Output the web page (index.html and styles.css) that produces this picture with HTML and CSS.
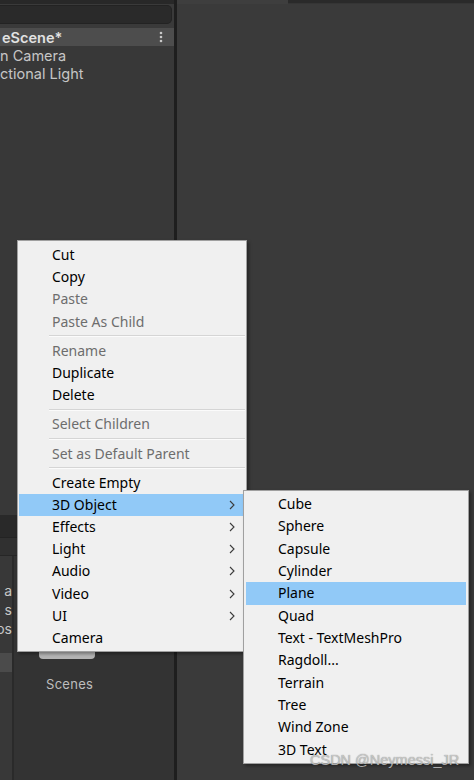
FILE: index.html
```html
<!DOCTYPE html>
<html lang="en">
<head>
<meta charset="UTF-8">
<meta name="viewport" content="width=device-width, initial-scale=1.0">
<title>Hierarchy context menu</title>
<link rel="stylesheet" href="styles.css">
</head>
<body>
<div class="editor">
    <div class="left-col">
        <div class="hierarchy">
            <div class="hier-toolbar">
                <div class="search"></div>
            </div>
            <div class="scene-row">
                <span>eScene*</span>
                <svg class="dots" width="4" height="12" viewBox="0 0 4 12">
                    <circle cx="2" cy="2" r="1.3"/>
                    <circle cx="2" cy="6" r="1.3"/>
                    <circle cx="2" cy="10" r="1.3"/>
                </svg>
            </div>
            <div class="hier-item">n Camera</div>
            <div class="hier-item">ctional Light</div>
        </div>
        <div class="project">
            <div class="project-tabs"></div>
            <div class="project-toolbar"></div>
            <div class="project-body">
                <div class="tree">
                    <div class="tree-item">a</div>
                    <div class="tree-item">s</div>
                    <div class="tree-item">os</div>
                    <div class="tree-item selected"></div>
                </div>
                <div class="tree-split"></div>
                <div class="assets">
                    <div class="folder-thumb"></div>
                    <div class="asset-label">Scenes</div>
                </div>
            </div>
        </div>
    </div>
    <div class="splitter"></div>
    <div class="right-col">
        <div class="right-top">
            <div class="tab-light"></div>
            <div class="tab-dark"></div>
        </div>
    </div>
</div>

<div class="menu main-menu">
    <div class="item">Cut</div>
    <div class="item">Copy</div>
    <div class="item disabled">Paste</div>
    <div class="item disabled">Paste As Child</div>
    <div class="sep"></div>
    <div class="item disabled">Rename</div>
    <div class="item">Duplicate</div>
    <div class="item">Delete</div>
    <div class="sep"></div>
    <div class="item disabled">Select Children</div>
    <div class="sep"></div>
    <div class="item disabled">Set as Default Parent</div>
    <div class="sep"></div>
    <div class="item">Create Empty</div>
    <div class="item active sub">3D Object<svg class="arrow" width="6" height="10" viewBox="0 0 6 10"><path d="M1 1 L5 5 L1 9"/></svg></div>
    <div class="item sub">Effects<svg class="arrow" width="6" height="10" viewBox="0 0 6 10"><path d="M1 1 L5 5 L1 9"/></svg></div>
    <div class="item sub">Light<svg class="arrow" width="6" height="10" viewBox="0 0 6 10"><path d="M1 1 L5 5 L1 9"/></svg></div>
    <div class="item sub">Audio<svg class="arrow" width="6" height="10" viewBox="0 0 6 10"><path d="M1 1 L5 5 L1 9"/></svg></div>
    <div class="item sub">Video<svg class="arrow" width="6" height="10" viewBox="0 0 6 10"><path d="M1 1 L5 5 L1 9"/></svg></div>
    <div class="item sub">UI<svg class="arrow" width="6" height="10" viewBox="0 0 6 10"><path d="M1 1 L5 5 L1 9"/></svg></div>
    <div class="item">Camera</div>
</div>

<div class="menu sub-menu">
    <div class="item">Cube</div>
    <div class="item">Sphere</div>
    <div class="item">Capsule</div>
    <div class="item">Cylinder</div>
    <div class="item active">Plane</div>
    <div class="item">Quad</div>
    <div class="item">Text - TextMeshPro</div>
    <div class="item">Ragdoll...</div>
    <div class="item">Terrain</div>
    <div class="item">Tree</div>
    <div class="item">Wind Zone</div>
    <div class="item">3D Text</div>
</div>

<div class="watermark">CSDN @Neymessi_JR</div>
</body>
</html>
```

FILE: styles.css
```css
body {
    margin: 0;
    width: 474px;
    height: 780px;
    overflow: hidden;
    background-color: #393939;
    font-family: Inter, "Noto Sans", sans-serif;
}
.editor {
    display: grid;
    grid-template-columns: 174px 3px 1fr;
    height: 780px;
}
.left-col {
    display: flex;
    flex-direction: column;
}
.hierarchy {
    height: 515px;
    background-color: #383838;
}
.hier-toolbar {
    height: 28px;
    padding-top: 5px;
    box-sizing: border-box;
    background: linear-gradient(#282828 0, #282828 4px, #3a3a3a 4px);
}
.search {
    width: 172px;
    height: 19px;
    background-color: #2a2a2a;
    border: 1px solid #232323;
    border-left: none;
    border-radius: 0 5px 5px 0;
    box-sizing: border-box;
}
.scene-row {
    height: 18px;
    background-color: #4d4d4d;
    display: flex;
    align-items: center;
    justify-content: space-between;
    padding: 0 11px 0 2px;
    color: #e2e2e2;
    font-size: 14.5px;
    font-weight: 600;
}
.dots {
    fill: #c8c8c8;
}
.hier-item {
    height: 18px;
    line-height: 19px;
    color: #c6c6c6;
    font-size: 14.5px;
}
.project {
    flex: 1;
    display: flex;
    flex-direction: column;
    background-color: #333333;
}
.project-tabs {
    height: 22px;
    background-color: #292929;
    border-bottom: 1px solid #232323;
}
.project-toolbar {
    height: 17px;
    background-color: #303030;
    border-bottom: 1px solid #262626;
}
.project-body {
    flex: 1;
    display: grid;
    grid-template-columns: 12px 2px 1fr;
}
.tree {
    background-color: #383838;
    padding-top: 25px;
    overflow: hidden;
}
.tree-item {
    height: 19px;
    line-height: 19px;
    color: #c6c6c6;
    font-size: 14px;
    white-space: nowrap;
    direction: rtl;
}
.tree-item.selected {
    margin-top: 15px;
    background-color: #4b4b4b;
}
.tree-split {
    background-color: #2a2a2a;
}
.assets {
    padding: 58px 0 0 25px;
}
.folder-thumb {
    width: 56px;
    height: 19px;
    margin-top: 26px;
    background-color: #b4b4b4;
    border-radius: 0 0 4px 4px;
}
.asset-label {
    margin: 17px 0 0 7px;
    color: #bdbdbd;
    font-size: 13px;
    letter-spacing: 0.3px;
}
.splitter {
    background-color: #1e1e1e;
}
.right-col {
    background-color: #3a3a3a;
}
.right-top {
    display: flex;
    height: 4px;
}
.tab-light {
    width: 111px;
    background-color: #3e3e3e;
}
.tab-dark {
    flex: 1;
    background-color: #2a2a2a;
    border-bottom: 1px solid #353535;
}

/* context menus */
.menu {
    position: absolute;
    background-color: #f0f0f0;
    border: 1px solid #a0a0a0;
    box-shadow: 2px 2px 3px rgba(0, 0, 0, 0.35);
    font-family: "Noto Sans", "Open Sans", sans-serif;
    font-size: 14px;
    color: #000;
}
.main-menu {
    left: 17px;
    top: 240px;
    width: 226px;
    padding: 3px 1px 2px;
}
.sub-menu {
    left: 243px;
    top: 490px;
    width: 220px;
    padding: 2px;
}
.item {
    height: 22.2px;
    line-height: 22px;
    padding-left: 33px;
    position: relative;
    white-space: nowrap;
}
.sub-menu .item {
    height: 22.35px;
    padding-left: 32px;
}
.item.disabled {
    color: #6d6d6d;
}
.item.active {
    background-color: #91c9f7;
}
.arrow {
    position: absolute;
    right: 10px;
    top: 6px;
    fill: none;
    stroke: #3c3c3c;
    stroke-width: 1.1;
}
.sep {
    height: 7px;
    margin-left: 30px;
    display: flex;
    align-items: center;
}
.sep::before {
    content: "";
    flex: 1;
    height: 1px;
    background-color: #d5d5d5;
    border-bottom: 1px solid #fbfbfb;
}
.watermark {
    position: absolute;
    left: 310px;
    top: 752px;
    font-family: "Liberation Sans", Arial, sans-serif;
    font-size: 14.5px;
    color: rgba(215, 215, 215, 0.75);
    text-shadow: 0 0 1px rgba(40, 40, 40, 0.6);
}
```
